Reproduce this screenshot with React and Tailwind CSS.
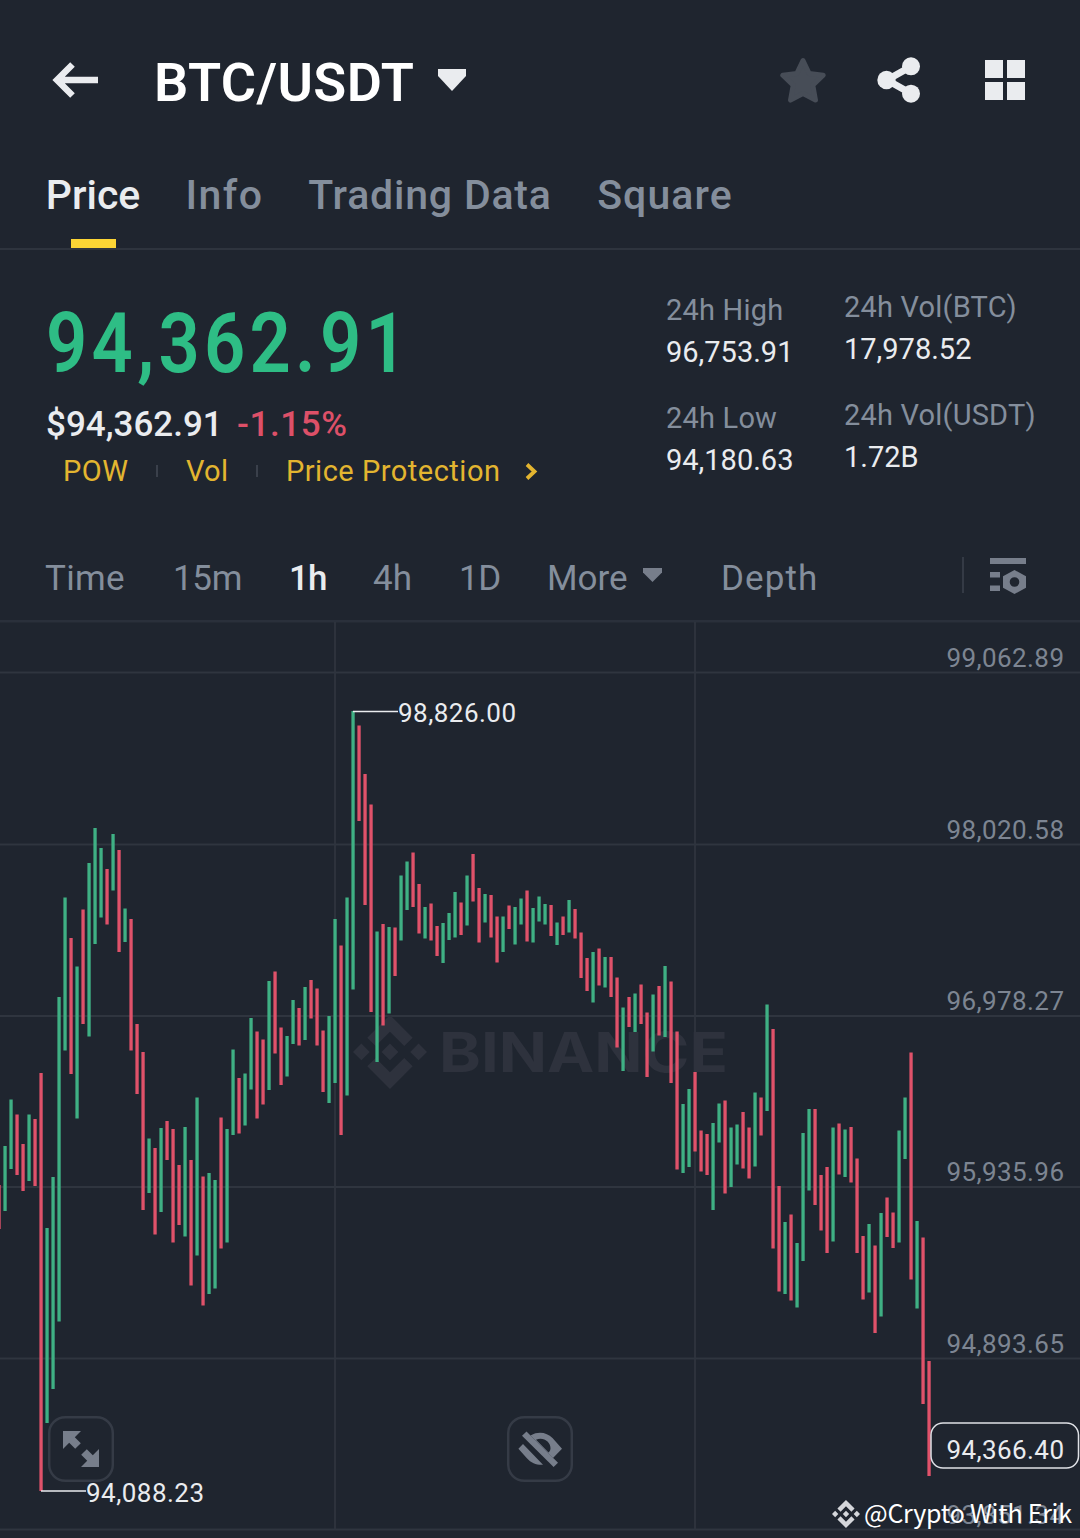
import { useState } from "react";

const BINANCE_PATH =
  "M16.624 13.9202l2.7175 2.7154-7.353 7.353-7.353-7.352 2.7175-2.7164 4.6355 4.6595 4.6356-4.6595zm4.6366-4.6366L24 12l-2.7154 2.7164L18.5682 12l2.6924-2.7164zm-9.272.001l2.7163 2.6914-2.7164 2.7174v-.001L9.2721 12l2.7164-2.7154zm-9.2722-.001L5.4088 12l-2.6914 2.6924L0 12l2.7164-2.7164zM11.9885.0115l7.353 7.329-2.7174 2.7154-4.6356-4.6356-4.6355 4.6595-2.7174-2.7154 7.353-7.353z";

const tabs = [
  { name: "Price", style: "w-[94px]" },
  { name: "Info", style: "w-[77px] tracking-[1.5px]" },
  { name: "Trading Data", style: "w-[242px] tracking-[0.8px]" },
  { name: "Square", style: "w-[136px] tracking-[1.1px]" },
];

const intervals = [
  { name: "Time", style: "w-[80px] tracking-[0.3px]" },
  { name: "15m", style: "w-[68px] tracking-[-0.3px]" },
  { name: "1h", style: "w-[36px] tracking-[-1px]" },
  { name: "4h", style: "w-[38px]" },
  { name: "1D", style: "w-[40px] tracking-[-0.5px]" },
];

const gridLines = [
  { y: 672.5, label: "99,062.89" },
  { y: 844.5, label: "98,020.58" },
  { y: 1016, label: "96,978.27" },
  { y: 1187, label: "95,935.96" },
  { y: 1358.5, label: "94,893.65" },
  { y: 1529.5, label: "93,851.34" },
];

// [up or down, high, low], one candle every 6px
const candles = [
  ["d", 1185, 1229], ["u", 1146, 1211], ["u", 1099.5, 1169], ["d", 1114.5, 1175], ["d", 1144, 1191], ["u", 1114.5, 1181],
  ["d", 1119, 1186], ["d", 1073, 1491], ["u", 1228, 1423], ["u", 1177, 1389], ["u", 997, 1321.5], ["u", 897.5, 1050.5],
  ["d", 938, 1074], ["u", 966.5, 1118.5], ["d", 909.5, 1024], ["u", 863, 1036.5], ["u", 828, 944], ["u", 848, 917.5],
  ["d", 869, 924.5], ["u", 834, 890.5], ["d", 850, 952], ["u", 908.5, 942], ["d", 919, 1050.5], ["d", 1024, 1094],
  ["d", 1052, 1210], ["u", 1138.5, 1193], ["d", 1148, 1234.5], ["u", 1128, 1212], ["d", 1121, 1160], ["d", 1129, 1242.5],
  ["d", 1165, 1225], ["u", 1127, 1236.5], ["d", 1160, 1285.5], ["u", 1097.5, 1255.5], ["d", 1176.5, 1305.5], ["u", 1173, 1294],
  ["u", 1180, 1288.5], ["d", 1117.5, 1248.5], ["u", 1129, 1242.5], ["u", 1049.5, 1135], ["d", 1078, 1133.5], ["u", 1073.5, 1125.5],
  ["u", 1018, 1089.5], ["d", 1031.5, 1118.5], ["d", 1039.5, 1104.5], ["u", 981, 1090], ["d", 971.5, 1053.5], ["d", 1027.5, 1085],
  ["u", 1036, 1076.5], ["u", 1000, 1044], ["d", 1008, 1045.5], ["u", 987, 1040], ["d", 980, 1018.5], ["d", 988.5, 1045.5],
  ["d", 1030.5, 1092], ["u", 1016, 1103], ["u", 919, 1083], ["d", 945.5, 1135], ["u", 897.5, 1095.5], ["u", 711, 989.5],
  ["d", 725.5, 821], ["d", 774, 905], ["d", 804.5, 1012], ["u", 931.5, 1062], ["d", 924, 1025.5], ["u", 927, 1013.5],
  ["d", 927.5, 976], ["u", 875.5, 940.5], ["u", 861.5, 910], ["d", 852.5, 907], ["d", 884, 933.5], ["u", 907, 938.5],
  ["d", 903.5, 940.5], ["d", 926, 956], ["u", 923, 963], ["u", 913, 940], ["u", 892, 937.5], ["d", 902.5, 935],
  ["u", 875.5, 925.5], ["d", 854, 901.5], ["d", 888, 942.5], ["u", 894, 922.5], ["d", 895, 937.5], ["d", 916.5, 962.5],
  ["u", 916.5, 952], ["d", 905.5, 929], ["u", 907, 944.5], ["u", 898.5, 924.5], ["d", 890.5, 941.5], ["u", 908, 942.5],
  ["u", 896.5, 921.5], ["u", 904, 924.5], ["d", 905, 936], ["u", 922.5, 945], ["d", 916.5, 935], ["u", 900, 932.5],
  ["d", 909, 938.5], ["d", 932.5, 978], ["d", 958, 991], ["u", 952, 1002.5], ["d", 948.5, 985.5], ["u", 957, 987.5],
  ["d", 957, 997], ["d", 977.5, 1047.5], ["u", 1007.5, 1071], ["d", 997, 1027], ["u", 993.5, 1032], ["d", 984.5, 1024],
  ["d", 1012.5, 1077], ["u", 994.5, 1051.5], ["d", 986, 1035.5], ["u", 966, 1037], ["d", 981.5, 1083], ["d", 1031.5, 1169.5],
  ["u", 1104, 1173], ["u", 1089, 1167], ["d", 1072, 1151.5], ["d", 1130.5, 1171.5], ["d", 1134, 1175], ["u", 1123, 1210],
  ["u", 1103.5, 1142.5], ["d", 1100.5, 1193.5], ["u", 1127.5, 1187], ["u", 1124.5, 1164.5], ["d", 1112, 1168.5], ["d", 1127.5, 1178.5],
  ["u", 1092.5, 1166.5], ["d", 1097.5, 1135.5], ["u", 1004.5, 1111], ["d", 1029, 1248.5], ["d", 1186, 1291.5], ["u", 1222, 1294],
  ["d", 1214.5, 1300.5], ["u", 1243, 1307.5], ["u", 1133, 1261], ["u", 1109, 1190.5], ["d", 1109, 1205], ["d", 1175, 1230.5],
  ["d", 1167, 1253], ["u", 1127.5, 1241.5], ["d", 1123.5, 1174.5], ["u", 1129.5, 1177], ["d", 1127, 1182.5], ["d", 1158.5, 1253],
  ["d", 1236, 1299.5], ["u", 1224, 1292.5], ["d", 1245.5, 1333], ["u", 1213, 1316.5], ["d", 1197.5, 1237], ["d", 1212.5, 1248],
  ["u", 1130.5, 1242.5], ["u", 1097.5, 1159], ["d", 1052.5, 1279.5], ["u", 1221, 1308.5], ["d", 1237.5, 1404], ["d", 1361, 1476],
];

const Header = () => (
  <header className="flex items-center h-40 pl-[52px] pr-[55px]">
    <svg className="w-[46px] h-[36px]" viewBox="0 0 46 36" fill="none" stroke="#eaecef" strokeWidth="6.5">
      <path d="M46 18H5M20.500 2.500L5 18l15.500 15.500" />
    </svg>
    <h1 className="ml-[56px] mt-[5px] w-[261px] text-[54px] leading-[64px] font-semibold text-white whitespace-nowrap tracking-[0.4px]">
      BTC/USDT
    </h1>
    <svg className="ml-[23px] w-[28px] h-[22px]" viewBox="0 0 28 22" fill="#eaecef">
      <path d="M0 0h28v7L14 22 0 7z" />
    </svg>
    <div className="flex items-center ml-auto">
      <svg className="w-[46px] h-[46px]" viewBox="0 0 46 46" fill="#474d57" stroke="#474d57" strokeWidth="5" strokeLinejoin="round">
        <path d="M23 3.500l6.200 13 14 1.800-10.400 9.800 2.700 15L23 36.500 10.500 43.100l2.700-15L2.800 18.300l14-1.800z" />
      </svg>
      <svg className="ml-[51px] w-[44px] h-[46px]" viewBox="0 0 44 46" fill="#eaecef" stroke="#eaecef">
        <path d="M34 9.500L10 23l24 13.500" fill="none" strokeWidth="7" />
        <g stroke="none">
          <circle cx="9.500" cy="23" r="9.200" />
          <circle cx="34" cy="9.300" r="9" />
          <circle cx="34" cy="36.700" r="9" />
        </g>
      </svg>
      <div className="grid grid-cols-2 gap-[4px] ml-[64px] w-[40px] h-[40px]">
        <span className="bg-[#eaecef]" />
        <span className="bg-[#eaecef]" />
        <span className="bg-[#eaecef]" />
        <span className="bg-[#eaecef]" />
      </div>
    </div>
  </header>
);

const Stat = ({ label, value }) => (
  <div className="h-[108px] whitespace-nowrap">
    <p className="text-[29px] leading-[30px] text-[#848e9c] tracking-[0.2px]">{label}</p>
    <p className="mt-3 text-[29px] leading-[30px] text-[#eaecef]">{value}</p>
  </div>
);

const Chart = () => (
  <svg className="block w-[1080px] h-[918px]" viewBox="0 620 1080 918" fontFamily="Roboto, sans-serif">
    <rect x="0" y="620" width="1080" height="2.500" fill="#2a303b" />

    {/* Grid */}
    <g stroke="#2f353f" strokeWidth="1.800">
      {gridLines.map((line) => (
        <line key={line.y} x1="0" x2="1080" y1={line.y} y2={line.y} />
      ))}
      <line x1="335" x2="335" y1="622" y2="1530" />
      <line x1="695" x2="695" y1="622" y2="1530" />
    </g>

    {/* Watermark */}
    <g fill="#2e323d">
      <path transform="translate(353 1015) scale(3.083)" d={BINANCE_PATH} />
      <text
        x="439"
        y="1072"
        fontFamily="Inter, sans-serif"
        fontWeight="700"
        fontSize="55"
        textLength="289"
        lengthAdjust="spacingAndGlyphs"
      >
        BINANCE
      </text>
    </g>

    {/* Candles */}
    {candles.map(([dir, high, low], index) => (
      <rect
        key={index}
        x={index * 6 - 2.6}
        y={high}
        width="3.300"
        height={low - high}
        fill={dir === "u" ? "#3fb084" : "#e0526a"}
      />
    ))}

    {/* Price axis */}
    <g fontSize="26" fill="#7d8592">
      {gridLines.map((line) => (
        <text key={line.label} x="946.500" y={line.y - 6} textLength="117.500">
          {line.label}
        </text>
      ))}
    </g>

    {/* High and low markers */}
    <g stroke="#eaecef" strokeWidth="1.700">
      <path d="M353 711.500h45M41 1491h45" />
    </g>
    <g fontSize="26" fill="#eaecef">
      <text x="398" y="722" textLength="118">98,826.00</text>
      <text x="86" y="1502" textLength="118">94,088.23</text>
    </g>

    {/* Last price */}
    <rect x="931" y="1423" width="147.500" height="45" rx="12" fill="#1f252f" stroke="#dfe1e6" strokeWidth="1.500" />
    <text x="946.500" y="1459" fontSize="26" fill="#eaecef" textLength="117.500">94,366.40</text>

    {/* Full screen button */}
    <rect x="49.200" y="1417.200" width="63.600" height="63.600" rx="16" fill="#1f252f" fillOpacity="0.800" stroke="#353b46" strokeWidth="2.500" />
    <g fill="#777e8b">
      <path d="M63 1431h18l-6.200 6.200 6 6-5.600 5.600-6-6-6.200 6.200z" />
      <path d="M99 1467H81l6.200-6.200-6-6 5.600-5.600 6 6 6.200-6.200z" />
    </g>

    {/* Hide button */}
    <rect x="508.200" y="1417.200" width="63.600" height="63.600" rx="16" fill="#1f252f" stroke="#353b46" strokeWidth="2.500" />
    <g fill="#777e8b">
      <path d="M522 1435.800l4.500-4.300 31.500 31.300-4.400 4.300z" />
      <path fillRule="evenodd" d="M530.500 1435.500C534 1433.500 537 1432.800 540 1432.800c5 0 9 2 12.500 5.200l9.500 10.700-9 9.300zM536 1439.800l12.500 12.800c1.500-1.500 2-3 2-4.400 0-5.200-4.500-9.500-10-9.500-1.600 0-3 .4-4.500 1.100z" />
      <path d="M523 1444l-4.600 4.700 8.500 9.500c4 4.500 9 6.600 14.500 6.600h1.600z" />
    </g>
  </svg>
);

const App = () => {
  const [activeTab, setActiveTab] = useState("Price");
  const [activeInterval, setActiveInterval] = useState("1h");

  return (
    <div className="relative w-[1080px] h-[1538px] overflow-hidden bg-[#1f252f] font-[Roboto,sans-serif]">
      <Header />

      {/* Tabs */}
      <nav className="flex gap-[46px] h-[90px] pl-[46px] border-b-2 border-[#2e343e]">
        {tabs.map((tab) => (
          <button
            key={tab.name}
            onClick={() => setActiveTab(tab.name)}
            className={`flex flex-col items-center justify-between text-[41px] leading-[70px] font-medium whitespace-nowrap ${tab.style} ${
              activeTab === tab.name ? "text-[#eaecef]" : "text-[#848e9c]"
            }`}
          >
            {tab.name}
            {activeTab === tab.name && <span className="w-[45px] h-[9px] bg-[#fcd535]" />}
          </button>
        ))}
      </nav>

      {/* Price Section */}
      <section className="flex h-72 pl-[46px] whitespace-nowrap">
        <div className="w-[620px] pt-[52px]">
          <p className="w-fit origin-left scale-x-[0.86] text-[84px] leading-[84px] font-semibold text-[#2ebd85] tracking-[5px]">
            94,362.91
          </p>
          <div className="flex mt-[18px] text-[35px] leading-[42px] font-medium">
            <span className="w-[191px] text-[#eaecef]">$94,362.91</span>
            <span className="text-[#dd5068] tracking-[0.6px]">-1.15%</span>
          </div>
          <div className="flex items-center mt-[10px] pl-[17px] text-[29px] leading-[30px] text-[#e3b530]">
            <span className="w-[93px] tracking-[0.5px]">POW</span>
            <span className="w-[2px] h-3 bg-[#3a404b]" />
            <span className="ml-[28px] w-[70px] tracking-[0.3px]">Vol</span>
            <span className="w-[2px] h-3 bg-[#3a404b]" />
            <span className="ml-[28px] w-[239px] tracking-[0.5px]">Price Protection</span>
            <svg className="w-[13px] h-[17px]" viewBox="0 0 13 17" fill="none" stroke="#e3b530" strokeWidth="3.800">
              <path d="M2 1.500l7.500 7L2 15.500" />
            </svg>
          </div>
        </div>
        <div className="w-[178px] pt-[45px]">
          <Stat label="24h High" value="96,753.91" />
          <Stat label="24h Low" value="94,180.63" />
        </div>
        <div className="pt-[42px]">
          <Stat label="24h Vol(BTC)" value="17,978.52" />
          <Stat label="24h Vol(USDT)" value="1.72B" />
        </div>
      </section>

      {/* Intervals */}
      <div className="flex items-center h-[82px] pl-[45px] pr-[54px] text-[35px] leading-[40px] text-[#848e9c]">
        <div className="flex gap-12">
          {intervals.map((item) => (
            <button
              key={item.name}
              onClick={() => setActiveInterval(item.name)}
              className={`text-left whitespace-nowrap ${item.style} ${
                activeInterval === item.name ? "font-medium text-[#eaecef]" : ""
              }`}
            >
              {item.name}
            </button>
          ))}
        </div>
        <button className="flex items-center ml-[48px]">
          <span className="w-[96px] text-left">More</span>
          <svg className="w-[19px] h-[14px] -mt-2" viewBox="0 0 19 14" fill="#777e8b">
            <path d="M0 0h19v4.500L9.500 14 0 4.500z" />
          </svg>
        </button>
        <button className="ml-[59px] tracking-[1.1px]">Depth</button>
        <span className="ml-auto mr-[26px] mb-2 w-[2px] h-9 bg-[#343a45]" />
        <svg className="w-[36px] h-[36px] mb-[6px]" viewBox="0 0 36 36" fill="#777e8b">
          <path d="M0 0h36v6H0zM0 14h10v5.500H0zM0 27.500h10V33H0z" />
          <path fillRule="evenodd" d="M24.500 12L36 18.200v11.600L24.500 36 13 29.800V18.200zM24.500 19.200a4.800 4.800 0 1 0 0 9.600 4.800 4.800 0 0 0 0-9.600z" />
        </svg>
      </div>

      <Chart />

      {/* Author tag over the chart */}
      <div className="absolute left-[832px] bottom-[8px] flex items-center gap-[4px] text-white">
        <svg className="w-[28px] h-[28px] mt-1" viewBox="0 0 24 24" fill="#d5d7db">
          <path d={BINANCE_PATH} />
        </svg>
        <span className="text-[25px] leading-[36px] whitespace-nowrap tracking-[-0.25px] font-['Noto_Sans_CJK_SC',sans-serif]">
          @Crypto With Erik
        </span>
      </div>
    </div>
  );
};

export default App;
